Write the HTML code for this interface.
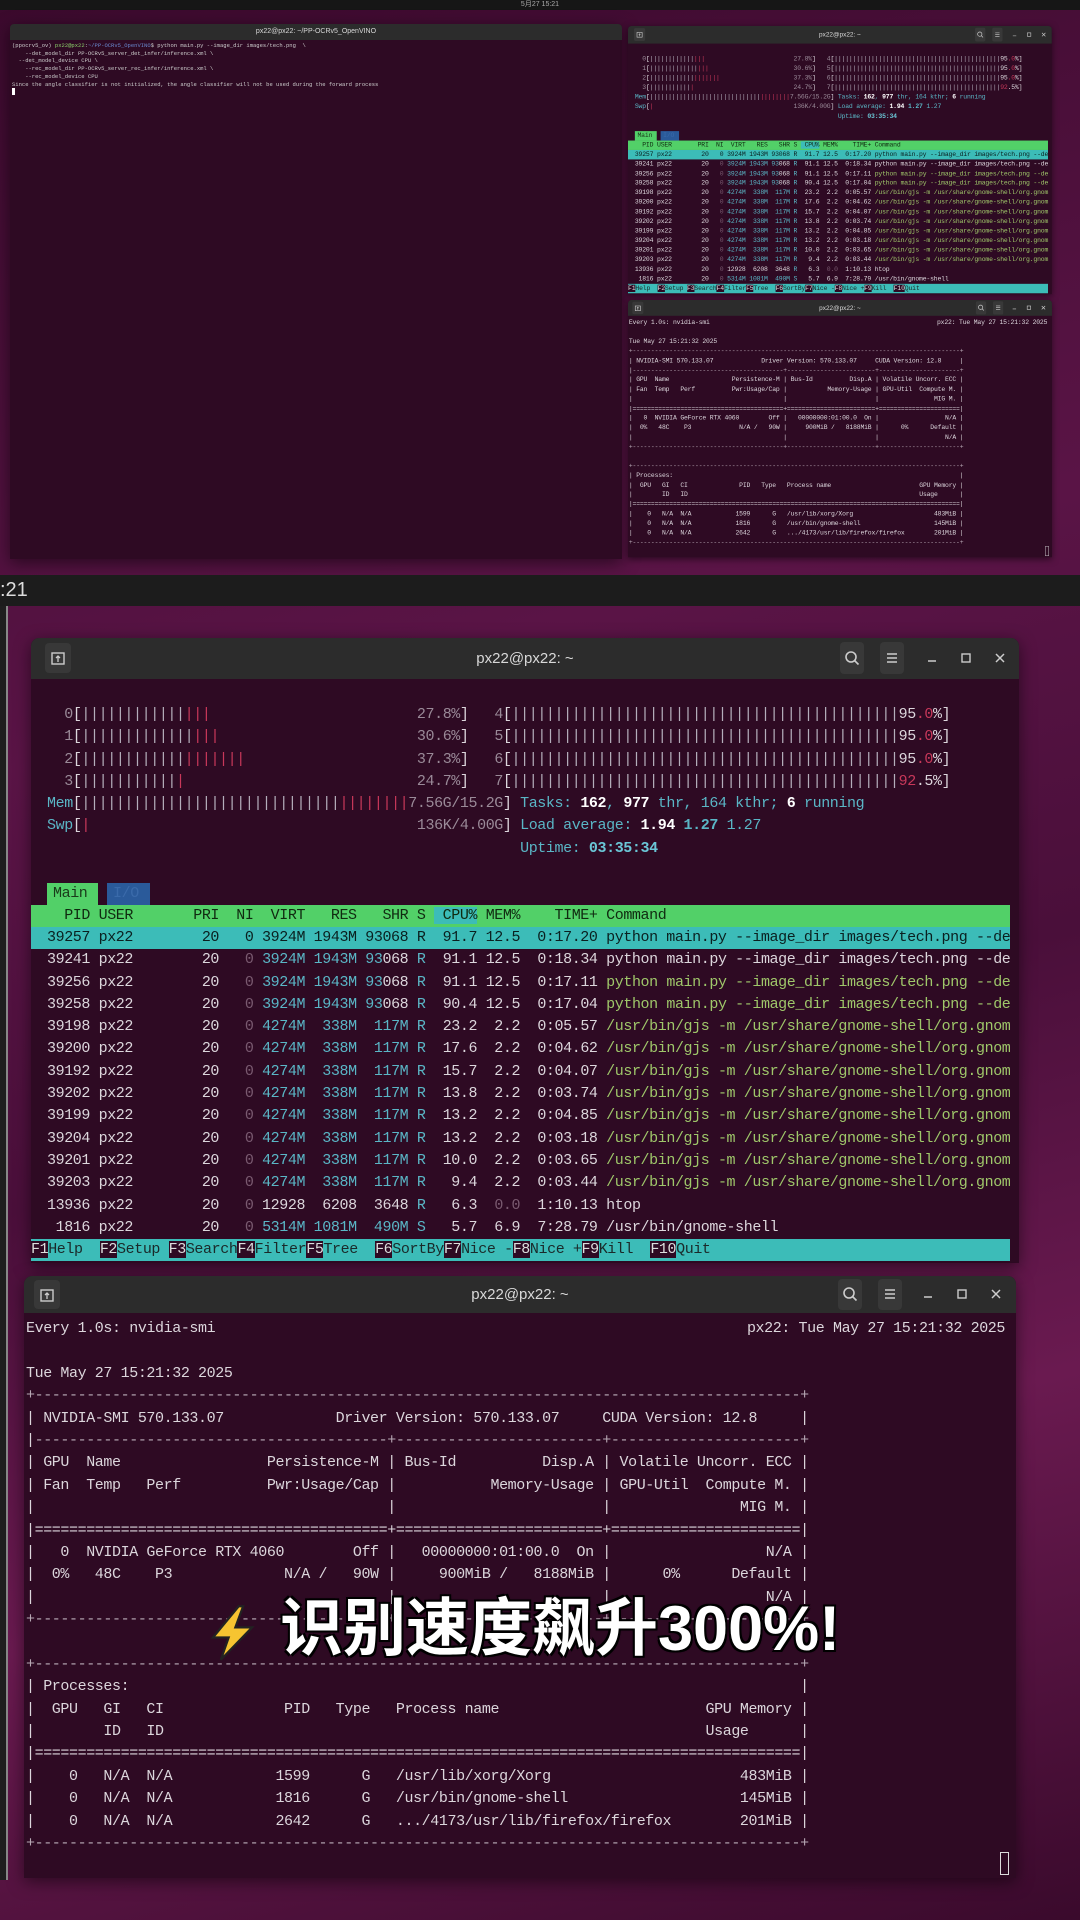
<!DOCTYPE html>
<html><head><meta charset="utf-8">
<style>
*{margin:0;padding:0;box-sizing:border-box}
html,body{width:1080px;height:1920px;overflow:hidden}
body{position:relative;background:linear-gradient(165deg,#3b0a2d 0%,#5a1446 35%,#4a0f3a 55%,#6a1a50 75%,#3a0a2c 100%);font-family:"Liberation Sans",sans-serif}
.win{position:absolute;background:#2e0a23;border-radius:8px 8px 0 0;overflow:hidden;font-family:"Liberation Mono",monospace;font-size:15px;letter-spacing:-0.4px;color:#dcd6dc;box-shadow:0 4px 16px rgba(0,0,0,.5)}
.tb{position:absolute;left:0;top:0;right:0;background:#2c2c2c;font-family:"Liberation Sans",sans-serif;letter-spacing:0}
.tb .t{position:absolute;left:0;right:0;text-align:center;color:#d8d8d8;font-size:15px}
.btn{position:absolute;width:24px;height:32px;background:#383838;border-radius:4px}
.ln{height:22.3px;line-height:22.3px;white-space:pre;padding-left:16px}
.g{color:#b4aebb}.r{color:#c8385a}.d{color:#9a8a98}.c{color:#5ab6c6}.w{color:#fff;font-weight:bold}.gr{color:#9fc76a}.dm{color:#7a5a70}
.hdr{background:#52d068;color:#102a10;width:979px}
.sel{background:#3cbcb8;color:#0a2020;width:979px}
.nl{height:22.4px;line-height:22.4px;white-space:pre;padding-left:2px}
.dash{color:#b7a8b4}
.fk{background:#2e0a23;color:#ddd}
</style></head><body>

<div style="position:absolute;left:0;top:0;width:1080px;height:10px;background:#161616;color:#aaa;font-size:7px;text-align:center;line-height:10px">5月27 15:21</div>

<div class="win" style="left:10px;top:24px;width:612px;height:535px;border-radius:4px 4px 0 0">
  <div class="tb" style="height:16px"><div class="t" style="font-size:7px;line-height:16px">px22@px22: ~/PP-OCRv5_OpenVINO</div></div>
  <div style="position:absolute;left:2px;top:18px;font-size:5.5px;letter-spacing:0;line-height:7.7px;white-space:pre;color:#ccc">(ppocrv5_ov) <span style="color:#8ad06a">px22@px22</span>:<span style="color:#6a8ad0">~/PP-OCRv5_OpenVINO</span>$ python main.py --image_dir images/tech.png  \
    --det_model_dir PP-OCRv5_server_det_infer/inference.xml \
  --det_model_device CPU \
    --rec_model_dir PP-OCRv5_server_rec_infer/inference.xml \
    --rec_model_device CPU
Since the angle classifier is not initialized, the angle classifier will not be used during the forward process
<span style="background:#fff">&nbsp;</span></div>
</div>

<div style="position:absolute;left:0;top:575px;width:1080px;height:31px;background:#1c1c1c;color:#ddd;font-size:20px;line-height:31px;padding-left:0">:21</div>
<div style="position:absolute;left:0;top:606px;width:8px;height:1274px;background:#1e1e1e;border-right:2px solid #888"></div>

<div class="win" id="h1" style="left:31px;top:638px;width:988px;height:625px">
  <div class="tb" style="height:41px">
    <div class="btn" style="left:14px;top:5px;width:26px;height:30px"></div>
    <svg style="position:absolute;left:19px;top:12px" width="16" height="16"><rect x="2" y="3" width="12" height="11" fill="none" stroke="#ccc" stroke-width="1.4"/><path d="M8 6v6M6 8l2-2 2 2" stroke="#ccc" fill="none" stroke-width="1.3"/></svg>
    <div class="t" style="line-height:41px">px22@px22: ~</div>
    <div class="btn" style="left:809px;top:4px"></div>
    <svg style="position:absolute;left:813px;top:12px" width="16" height="16"><circle cx="7" cy="7" r="5" fill="none" stroke="#ccc" stroke-width="1.6"/><path d="M10.5 10.5l4 4" stroke="#ccc" stroke-width="1.6"/></svg>
    <div class="btn" style="left:849px;top:4px"></div>
    <svg style="position:absolute;left:853px;top:12px" width="16" height="16"><path d="M3 4h10M3 8h10M3 12h10" stroke="#ccc" stroke-width="1.4"/></svg>
    <svg style="position:absolute;left:894px;top:13px" width="14" height="14"><path d="M3 10h8" stroke="#ccc" stroke-width="1.4"/></svg>
    <svg style="position:absolute;left:928px;top:13px" width="14" height="14"><rect x="3" y="3" width="8" height="8" fill="none" stroke="#ccc" stroke-width="1.4"/></svg>
    <svg style="position:absolute;left:962px;top:13px" width="14" height="14"><path d="M3 3l8 8M11 3l-8 8" stroke="#ccc" stroke-width="1.5"/></svg>
  </div>
  <div style="position:absolute;left:0;top:66px">
<div class="ln">  <span class="d">0</span>[<span class="g">||||||||||||</span><span class="r">|||</span>                        <span class="d">27.8%</span>]   <span class="d">4</span>[<span class="g">|||||||||||||||||||||||||||||||||||||||||||||</span>95<span class="r">.0</span>%]</div>
<div class="ln">  <span class="d">1</span>[<span class="g">|||||||||||||</span><span class="r">|||</span>                       <span class="d">30.6%</span>]   <span class="d">5</span>[<span class="g">|||||||||||||||||||||||||||||||||||||||||||||</span>95<span class="r">.0</span>%]</div>
<div class="ln">  <span class="d">2</span>[<span class="g">||||||||||||</span><span class="r">|||||||</span>                    <span class="d">37.3%</span>]   <span class="d">6</span>[<span class="g">|||||||||||||||||||||||||||||||||||||||||||||</span>95<span class="r">.0</span>%]</div>
<div class="ln">  <span class="d">3</span>[<span class="g">|||||||||||</span><span class="r">|</span>                           <span class="d">24.7%</span>]   <span class="d">7</span>[<span class="g">|||||||||||||||||||||||||||||||||||||||||||||</span><span class="r">92</span>.5%]</div>
<div class="ln"><span class="c">Mem</span>[<span class="g">||||||||||||||||||||||||||||||</span><span class="r">||||||||</span><span class="d">7.56G/15.2G</span>] <span class="c">Tasks: </span><span class="w">162</span><span class="c">, </span><span class="w">977</span><span class="c"> thr, </span><span class="c">164 kthr; </span><span class="w">6</span><span class="c"> running</span></div>
<div class="ln"><span class="c">Swp</span>[<span class="r">|</span>                                      <span class="d">136K/4.00G</span>] <span class="c">Load average: </span><span class="w">1.94 </span><span class="c" style="font-weight:bold">1.27 </span><span class="c">1.27</span></div>
<div class="ln">                                                       <span class="c">Uptime: </span><span class="w" style="color:#6ac6d6">03:35:34</span></div>
<div class="ln"> </div>
<div class="ln" style="position:relative"><span style="position:absolute;left:16px;top:1px;width:51px;height:22px;background:#52d068;color:#1a3a1a;padding-left:6px">Main</span><span style="position:absolute;left:76px;top:1px;width:43px;height:22px;background:#2a5a9a;color:#3a6aaa;padding-left:6px">I/O</span></div>
<div class="ln hdr">  PID USER       PRI  NI  VIRT   RES   SHR S <span style="background:#3cbcb8"> CPU%</span> MEM%    TIME+ Command</div>
<div class="ln sel">39257 px22        20   0 3924M 1943M 93068 R  91.7 12.5  0:17.20 python main.py --image_dir images/tech.png --de</div>
<div class="ln">39241 px22        20   <span class="dm">0</span> <span class="c">3924M 1943M 93</span>068 <span class="c">R</span>  91.1 12.5  0:18.34 python main.py --image_dir images/tech.png --de</div>
<div class="ln">39256 px22        20   <span class="dm">0</span> <span class="c">3924M 1943M 93</span>068 <span class="c">R</span>  91.1 12.5  0:17.11 <span class="gr">python main.py --image_dir images/tech.png --de</span></div>
<div class="ln">39258 px22        20   <span class="dm">0</span> <span class="c">3924M 1943M 93</span>068 <span class="c">R</span>  90.4 12.5  0:17.04 <span class="gr">python main.py --image_dir images/tech.png --de</span></div>
<div class="ln">39198 px22        20   <span class="dm">0</span> <span class="c">4274M  338M  117M R</span>  23.2  2.2  0:05.57 <span class="gr">/usr/bin/gjs -m /usr/share/gnome-shell/org.gnom</span></div>
<div class="ln">39200 px22        20   <span class="dm">0</span> <span class="c">4274M  338M  117M R</span>  17.6  2.2  0:04.62 <span class="gr">/usr/bin/gjs -m /usr/share/gnome-shell/org.gnom</span></div>
<div class="ln">39192 px22        20   <span class="dm">0</span> <span class="c">4274M  338M  117M R</span>  15.7  2.2  0:04.07 <span class="gr">/usr/bin/gjs -m /usr/share/gnome-shell/org.gnom</span></div>
<div class="ln">39202 px22        20   <span class="dm">0</span> <span class="c">4274M  338M  117M R</span>  13.8  2.2  0:03.74 <span class="gr">/usr/bin/gjs -m /usr/share/gnome-shell/org.gnom</span></div>
<div class="ln">39199 px22        20   <span class="dm">0</span> <span class="c">4274M  338M  117M R</span>  13.2  2.2  0:04.85 <span class="gr">/usr/bin/gjs -m /usr/share/gnome-shell/org.gnom</span></div>
<div class="ln">39204 px22        20   <span class="dm">0</span> <span class="c">4274M  338M  117M R</span>  13.2  2.2  0:03.18 <span class="gr">/usr/bin/gjs -m /usr/share/gnome-shell/org.gnom</span></div>
<div class="ln">39201 px22        20   <span class="dm">0</span> <span class="c">4274M  338M  117M R</span>  10.0  2.2  0:03.65 <span class="gr">/usr/bin/gjs -m /usr/share/gnome-shell/org.gnom</span></div>
<div class="ln">39203 px22        20   <span class="dm">0</span> <span class="c">4274M  338M  117M R</span>   9.4  2.2  0:03.44 <span class="gr">/usr/bin/gjs -m /usr/share/gnome-shell/org.gnom</span></div>
<div class="ln">13936 px22        20   <span class="dm">0</span> 12928  6208  3648 <span class="c">R</span>   6.3  <span class="dm">0.0</span>  1:10.13 htop</div>
<div class="ln"> 1816 px22        20   <span class="dm">0</span> <span class="c">5314M 1081M  490M S</span>   5.7  6.9  7:28.79 /usr/bin/gnome-shell</div>
<div class="ln" style="padding-left:0;background:#3cbcb8;width:979px;color:#1a2a2a"><span class="fk">F1</span>Help  <span class="fk">F2</span>Setup <span class="fk">F3</span>Search<span class="fk">F4</span>Filter<span class="fk">F5</span>Tree  <span class="fk">F6</span>SortBy<span class="fk">F7</span>Nice -<span class="fk">F8</span>Nice +<span class="fk">F9</span>Kill  <span class="fk">F10</span>Quit</div>
  </div>
</div>

<div class="win" id="n1" style="left:24px;top:1276px;width:992px;height:602px">
  <div class="tb" style="height:37px">
    <div class="btn" style="left:10px;top:4px;width:26px;height:29px"></div>
    <svg style="position:absolute;left:15px;top:11px" width="16" height="16"><rect x="2" y="3" width="12" height="11" fill="none" stroke="#ccc" stroke-width="1.4"/><path d="M8 6v6M6 8l2-2 2 2" stroke="#ccc" fill="none" stroke-width="1.3"/></svg>
    <div class="t" style="line-height:37px">px22@px22: ~</div>
    <div class="btn" style="left:814px;top:3px;height:31px"></div>
    <svg style="position:absolute;left:818px;top:10px" width="16" height="16"><circle cx="7" cy="7" r="5" fill="none" stroke="#ccc" stroke-width="1.6"/><path d="M10.5 10.5l4 4" stroke="#ccc" stroke-width="1.6"/></svg>
    <div class="btn" style="left:854px;top:3px;height:31px"></div>
    <svg style="position:absolute;left:858px;top:10px" width="16" height="16"><path d="M3 4h10M3 8h10M3 12h10" stroke="#ccc" stroke-width="1.4"/></svg>
    <svg style="position:absolute;left:897px;top:11px" width="14" height="14"><path d="M3 10h8" stroke="#ccc" stroke-width="1.4"/></svg>
    <svg style="position:absolute;left:931px;top:11px" width="14" height="14"><rect x="3" y="3" width="8" height="8" fill="none" stroke="#ccc" stroke-width="1.4"/></svg>
    <svg style="position:absolute;left:965px;top:11px" width="14" height="14"><path d="M3 3l8 8M11 3l-8 8" stroke="#ccc" stroke-width="1.5"/></svg>
  </div>
  <div style="position:absolute;left:0;top:42px;width:992px">
<div class="nl" style="position:relative">Every 1.0s: nvidia-smi<span style="position:absolute;right:11px;top:0">px22: Tue May 27 15:21:32 2025</span></div>
<div class="nl"> </div>
<div class="nl">Tue May 27 15:21:32 2025</div>
<div class="nl dash">+-----------------------------------------------------------------------------------------+</div>
<div class="nl">| NVIDIA-SMI 570.133.07             Driver Version: 570.133.07     CUDA Version: 12.8     |</div>
<div class="nl">|<span class="dash">-----------------------------------------+------------------------+----------------------+</span></div>
<div class="nl">| GPU  Name                 Persistence-M | Bus-Id          Disp.A | Volatile Uncorr. ECC |</div>
<div class="nl">| Fan  Temp   Perf          Pwr:Usage/Cap |           Memory-Usage | GPU-Util  Compute M. |</div>
<div class="nl">|                                         |                        |               MIG M. |</div>
<div class="nl">|=========================================+========================+======================|</div>
<div class="nl">|   0  NVIDIA GeForce RTX 4060        Off |   00000000:01:00.0  On |                  N/A |</div>
<div class="nl">|  0%   48C    P3             N/A /   90W |     900MiB /   8188MiB |      0%      Default |</div>
<div class="nl">|                                         |                        |                  N/A |</div>
<div class="nl dash">+-----------------------------------------+------------------------+----------------------+</div>
<div class="nl"> </div>
<div class="nl dash">+-----------------------------------------------------------------------------------------+</div>
<div class="nl">| Processes:                                                                              |</div>
<div class="nl">|  GPU   GI   CI              PID   Type   Process name                        GPU Memory |</div>
<div class="nl">|        ID   ID                                                               Usage      |</div>
<div class="nl">|=========================================================================================|</div>
<div class="nl">|    0   N/A  N/A            1599      G   /usr/lib/xorg/Xorg                      483MiB |</div>
<div class="nl">|    0   N/A  N/A            1816      G   /usr/bin/gnome-shell                    145MiB |</div>
<div class="nl">|    0   N/A  N/A            2642      G   .../4173/usr/lib/firefox/firefox        201MiB |</div>
<div class="nl dash">+-----------------------------------------------------------------------------------------+</div>
  </div>
  <div style="position:absolute;left:976px;top:576px;width:9px;height:23px;border:1.5px solid #ddd"></div>
</div>

<svg style="position:absolute;left:204px;top:1604px" width="56" height="58" viewBox="0 0 50 52"><path d="M31 2 L8 30 L22 30 L15 50 L43 21 L28 21 L35 2 Z" fill="#f6c431" stroke="#222" stroke-width="2"/></svg>
<div style="position:absolute;left:280px;top:1592px;font-family:'Liberation Sans','Noto Sans CJK SC',sans-serif;font-weight:bold;font-size:63px;letter-spacing:0;color:#fff;line-height:74px;white-space:nowrap;text-shadow:0 0 3px #000,2px 2px 0 #000,-2px -2px 0 #000,2px -2px 0 #000,-2px 2px 0 #000">识别速度飙升300%!</div>

<script>
(function(){
 var h=document.getElementById('h1').cloneNode(true);h.id='h2';
 h.style.left='628px';h.style.top='26px';h.style.transformOrigin='0 0';h.style.transform='scale(0.429)';
 document.body.appendChild(h);
 var n=document.getElementById('n1').cloneNode(true);n.id='n2';
 n.style.left='628px';n.style.top='300px';n.style.transformOrigin='0 0';n.style.transform='scale(0.4274)';
 document.body.appendChild(n);
})();
</script>
</body></html>
